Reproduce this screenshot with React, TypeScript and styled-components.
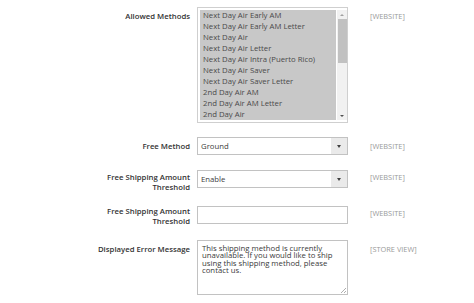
import React from 'react';
import styled, { createGlobalStyle } from 'styled-components';

const Global = createGlobalStyle`
  html, body {
    margin: 0;
    padding: 0;
    background: #ffffff;
  }
  body {
    font-family: "Open Sans", "Noto Sans", sans-serif;
    font-size: 7.75px;
    color: #303030;
  }
`;

const Form = styled.div`
  display: flex;
  flex-direction: column;
  padding-top: 7px;
`;

const Row = styled.div<{ $gap: number }>`
  display: grid;
  grid-template-columns: 190px 151px auto;
  column-gap: 7px;
  align-items: start;
  margin-bottom: ${p => p.$gap}px;
`;

const Label = styled.div<{ $top: number }>`
  text-align: right;
  font-weight: 600;
  line-height: 10px;
  color: #333333;
  padding-top: ${p => p.$top}px;
`;

const Scope = styled.div<{ $top: number }>`
  margin-left: 15px;
  padding-top: ${p => p.$top}px;
  line-height: 10px;
  color: #9a9a9a;
  font-size: 7.4px;
`;

const ListBox = styled.div`
  display: flex;
  height: 116px;
  box-sizing: border-box;
  border: 1px solid #cfcfcf;
  background: #fff;
  padding: 2px 0 2px 2px;
`;

const Options = styled.div`
  flex: 1;
  background: #c8c8c8;
  overflow: hidden;
`;

const Option = styled.div`
  height: 11px;
  line-height: 11px;
  padding-left: 3px;
  color: #4a4a4a;
  white-space: nowrap;
`;

const ScrollBar = styled.div`
  width: 10px;
  margin-left: 1px;
  display: flex;
  flex-direction: column;
  align-items: center;
  background: #f1f1f1;
`;

const Arrow = styled.div<{ $down?: boolean }>`
  height: 9px;
  display: flex;
  align-items: center;
  justify-content: center;
  &::after {
    content: '';
    border-left: 2px solid transparent;
    border-right: 2px solid transparent;
    ${p => (p.$down ? 'border-top: 2px solid #505050;' : 'border-bottom: 2px solid #a0a0a0;')}
  }
`;

const Thumb = styled.div`
  width: 9px;
  height: 44px;
  background: #c1c1c1;
`;

const Track = styled.div`
  flex: 1;
`;

const Select = styled.div`
  display: flex;
  height: 18px;
  box-sizing: border-box;
  border: 1px solid #c2c2c2;
  background: #fff;
`;

const SelectValue = styled.div`
  flex: 1;
  line-height: 16px;
  padding-left: 3px;
  color: #404040;
`;

const SelectButton = styled.div`
  width: 16px;
  background: #eaeaea;
  display: flex;
  align-items: center;
  justify-content: center;
  &::after {
    content: '';
    border-left: 2.5px solid transparent;
    border-right: 2.5px solid transparent;
    border-top: 3px solid #404040;
  }
`;

const Input = styled.div`
  height: 18px;
  box-sizing: border-box;
  border: 1px solid #c2c2c2;
  background: #fff;
`;

const TextArea = styled.div`
  position: relative;
  height: 55px;
  box-sizing: border-box;
  border: 1px solid #c2c2c2;
  background: #fff;
  padding: 4px 4px 3px;
  line-height: 7.3px;
  color: #3a3a3a;
`;

const Grip = styled.svg`
  position: absolute;
  right: 1px;
  bottom: 1px;
`;

const methods = [
  'Next Day Air Early AM',
  'Next Day Air Early AM Letter',
  'Next Day Air',
  'Next Day Air Letter',
  'Next Day Air Intra (Puerto Rico)',
  'Next Day Air Saver',
  'Next Day Air Saver Letter',
  '2nd Day Air AM',
  '2nd Day Air AM Letter',
  '2nd Day Air',
];

export default function App() {
  return (
    <>
      <Global />
      <Form>
        <Row $gap={14}>
          <Label $top={4}>Allowed Methods</Label>
          <ListBox>
            <Options>
              {methods.map(m => (
                <Option key={m}>{m}</Option>
              ))}
            </Options>
            <ScrollBar>
              <Arrow />
              <Thumb />
              <Track />
              <Arrow $down />
            </ScrollBar>
          </ListBox>
          <Scope $top={4}>[WEBSITE]</Scope>
        </Row>
        <Row $gap={15}>
          <Label $top={4}>Free Method</Label>
          <Select>
            <SelectValue>Ground</SelectValue>
            <SelectButton />
          </Select>
          <Scope $top={4}>[WEBSITE]</Scope>
        </Row>
        <Row $gap={14}>
          <Label $top={2}>
            Free Shipping Amount
            <br />
            Threshold
          </Label>
          <Select>
            <SelectValue>Enable</SelectValue>
            <SelectButton />
          </Select>
          <Scope $top={2}>[WEBSITE]</Scope>
        </Row>
        <Row $gap={14}>
          <Label $top={0}>
            Free Shipping Amount
            <br />
            Threshold
          </Label>
          <Input />
          <Scope $top={2}>[WEBSITE]</Scope>
        </Row>
        <Row $gap={0}>
          <Label $top={4}>Displayed Error Message</Label>
          <TextArea>
            This shipping method is currently unavailable. If you would like to ship using this shipping method, please
            contact us.
            <Grip width="6" height="6" viewBox="0 0 6 6">
              <path d="M6 1 L1 6 M6 4 L4 6" stroke="#9a9a9a" strokeWidth="0.8" />
            </Grip>
          </TextArea>
          <Scope $top={4}>[STORE VIEW]</Scope>
        </Row>
      </Form>
    </>
  );
}
